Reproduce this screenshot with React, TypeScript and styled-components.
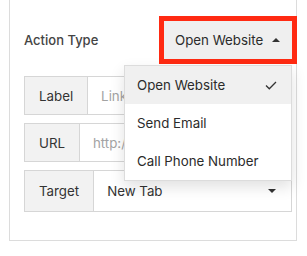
import React from 'react'
import styled, { createGlobalStyle } from 'styled-components'

const GlobalStyle = createGlobalStyle`
  html, body {
    margin: 0;
    padding: 0;
    background: #fff;
  }
  body {
    font-family: Inter, "Noto Sans", sans-serif;
    color: #333;
  }
`

const Panel = styled.div`
  position: relative;
  margin-left: 9px;
  width: 288px;
  box-sizing: border-box;
  border: 1px solid #dcdcdc;
  border-top: none;
  padding: 21px 4px 28px 14px;
  display: flex;
  flex-direction: column;
`

const ActionRow = styled.div`
  display: flex;
  align-items: center;
  justify-content: space-between;
  margin-bottom: 17px;
`

const FieldLabel = styled.span`
  font-size: 13px;
  font-weight: 500;
  color: #444;
`

const DropdownWrap = styled.div`
  position: relative;
`

const DropdownButton = styled.button`
  display: flex;
  align-items: center;
  justify-content: space-between;
  width: 128px;
  height: 38px;
  box-sizing: border-box;
  padding: 0 12px 0 11px;
  border: none;
  background: #efefef;
  outline: 5px solid #ff2a12;
  font-family: inherit;
  font-size: 13.3px;
  color: #2b2b2b;
  cursor: pointer;
`

const Menu = styled.ul`
  position: absolute;
  top: 44px;
  right: 0;
  width: 168px;
  margin: 0;
  padding: 0;
  list-style: none;
  background: #fff;
  border: 1px solid #dcdcdc;
  box-sizing: border-box;
  box-shadow: 0 6px 14px rgba(0, 0, 0, 0.12);
  z-index: 2;
`

const MenuItem = styled.li<{ $active?: boolean }>`
  display: flex;
  align-items: center;
  justify-content: space-between;
  height: 38px;
  padding: 0 14px 0 12px;
  font-size: 13.3px;
  color: #2b2b2b;
  background: ${(p) => (p.$active ? '#f0f0f0' : '#fff')};
`

const Groups = styled.div`
  display: flex;
  flex-direction: column;
  gap: 8px;
`

const InputGroup = styled.div<{ $tall?: boolean }>`
  display: flex;
  height: ${(p) => (p.$tall ? 42 : 39)}px;
  box-sizing: border-box;
  border: 1px solid #d6d6d6;
`

const Addon = styled.span`
  display: flex;
  align-items: center;
  padding: 0 14px;
  background: #f2f2f2;
  border-right: 1px solid #d6d6d6;
  font-size: 13.3px;
  color: #333;
`

const TextInput = styled.input`
  flex: 1;
  min-width: 0;
  border: none;
  outline: none;
  padding: 0 13px;
  font-family: inherit;
  font-size: 13.3px;
  color: #333;
  &::placeholder {
    color: #a3a3a3;
  }
`

const SelectBox = styled.div`
  flex: 1;
  display: flex;
  align-items: center;
  justify-content: space-between;
  padding: 0 15px 0 13px;
  font-size: 13.3px;
  color: #333;
`

const Caret = ({ up }: { up?: boolean }) => (
  <svg width="8" height="4" viewBox="0 0 8 4">
    <path d={up ? 'M0 4 L4 0 L8 4 Z' : 'M0 0 L4 4 L8 0 Z'} fill="#333" />
  </svg>
)

const CheckMark = () => (
  <svg width="12" height="9" viewBox="0 0 12 9">
    <path d="M1 4.5 L4.3 7.8 L11 1" fill="none" stroke="#333" strokeWidth="1.3" />
  </svg>
)

const options = ['Open Website', 'Send Email', 'Call Phone Number']

export default function App() {
  return (
    <>
      <GlobalStyle />
      <Panel>
        <ActionRow>
          <FieldLabel>Action Type</FieldLabel>
          <DropdownWrap>
            <DropdownButton>
              Open Website
              <Caret up />
            </DropdownButton>
            <Menu>
              {options.map((o, i) => (
                <MenuItem key={o} $active={i === 0}>
                  {o}
                  {i === 0 && <CheckMark />}
                </MenuItem>
              ))}
            </Menu>
          </DropdownWrap>
        </ActionRow>
        <Groups>
          <InputGroup>
            <Addon>Label</Addon>
            <TextInput placeholder="Link text" />
          </InputGroup>
          <InputGroup>
            <Addon>URL</Addon>
            <TextInput placeholder="http://example.com" />
          </InputGroup>
          <InputGroup $tall>
            <Addon>Target</Addon>
            <SelectBox>
              New Tab
              <Caret />
            </SelectBox>
          </InputGroup>
        </Groups>
      </Panel>
    </>
  )
}
